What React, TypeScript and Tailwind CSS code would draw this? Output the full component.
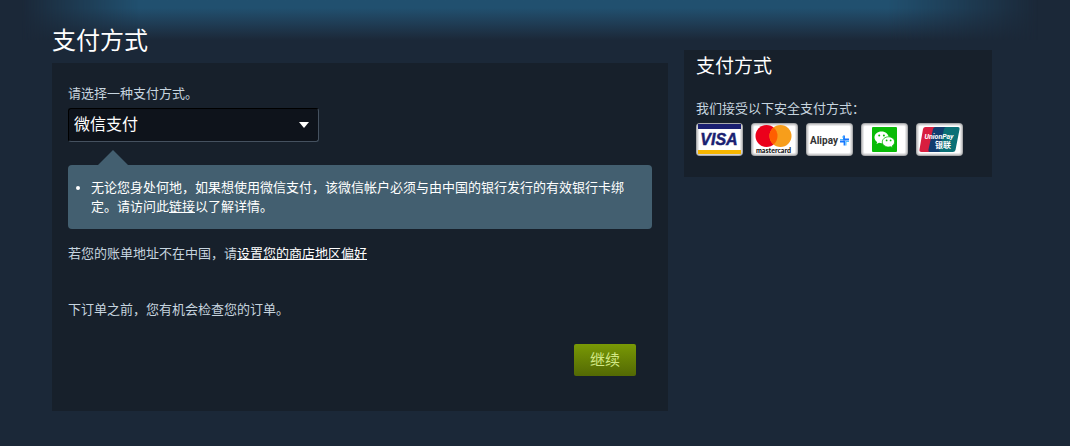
import React, { useState } from 'react';

interface CardBadgeProps {
  label: string;
  children: React.ReactNode;
}

const methods = ['微信支付', '支付宝', 'Visa', 'MasterCard', '银联'];

// White card with a grey bevelled rim, the brand is drawn on top of it
const CardBadge: React.FC<CardBadgeProps> = ({ label, children }) => (
  <svg width="47" height="33" viewBox="0 0 47 33" role="img" aria-label={label} className="shrink-0">
    <rect x="0" y="0" width="47" height="33" rx="4" fill="#a9aaac" />
    <rect x="1" y="1" width="45" height="31" rx="3" fill="#d0d0d1" />
    <rect x="2" y="2" width="43" height="29" rx="2" fill="#e9e9ea" />
    <rect x="3" y="3" width="41" height="27" rx="1" fill="#fff" />
    {children}
  </svg>
);

const PaymentLogos = () => (
  <div className="flex flex-wrap gap-2">
    <CardBadge label="Visa">
      <rect x="2" y="1" width="43" height="5" fill="#1a1f71" />
      <rect x="2" y="27" width="43" height="4" fill="#f7b600" />
      <text x="23" y="22" textAnchor="middle" fontFamily="Liberation Sans, sans-serif" fontSize="16" fontWeight="700" fontStyle="italic" fill="#1a1f71" stroke="#1a1f71" strokeWidth="0.5">VISA</text>
    </CardBadge>
    <CardBadge label="MasterCard">
      <circle cx="15.5" cy="13" r="11" fill="#eb001b" />
      <circle cx="29.5" cy="13" r="11" fill="#f79e1b" />
      <path d="M22.5 4.5a11 11 0 0 1 0 17a11 11 0 0 1 0-17z" fill="#ff5f00" />
      <text x="22.5" y="30" textAnchor="middle" fontFamily="Lato, sans-serif" fontSize="7" fontWeight="900" fill="#111">mastercard</text>
    </CardBadge>
    <CardBadge label="Alipay+">
      <text x="4" y="21" fontFamily="Roboto, sans-serif" fontSize="10" fontWeight="700" fill="#333">Alipay</text>
      <path d="M38 12.500v4h5" fill="none" stroke="#1677ff" strokeWidth="1.800" />
      <path d="M34 18.500h4.500v4" fill="none" stroke="#1677ff" strokeWidth="1.800" />
      <path d="M34 16.500h3M40 18.500v4M40 18.500h3M37 15v-2" fill="none" stroke="#4dbdff" strokeWidth="1" />
    </CardBadge>
    <CardBadge label="微信支付">
      <rect x="11" y="4" width="25" height="25" rx="1" fill="#09bb07" />
      <path d="M20.500 8.500c-4 0-7 2.600-7 5.900 0 1.900 1 3.500 2.700 4.600l-.7 2.100 2.500-1.300c.8.2 1.600.4 2.500.4 4 0 7.200-2.600 7.200-5.800s-3.200-5.900-7.200-5.900z" fill="#fff" />
      <path d="M27.600 13.800c-3.600 0-6.300 2.300-6.300 5.100s2.700 5.100 6.300 5.100c.7 0 1.400-.1 2-.3l2.100 1.100-.6-1.800c1.500-1 2.500-2.400 2.500-4.100 0-2.800-2.600-5.100-6-5.100z" fill="#fff" stroke="#09bb07" strokeWidth="0.8" />
      <circle cx="18.200" cy="12.500" r="1" fill="#09bb07" />
      <circle cx="22.900" cy="12.500" r="1" fill="#09bb07" />
      <circle cx="25.600" cy="17.400" r="0.9" fill="#09bb07" />
      <circle cx="29.600" cy="17.400" r="0.9" fill="#09bb07" />
    </CardBadge>
    <CardBadge label="UnionPay 银联">
      <path d="M9.500 4h11l-5 25H5.500q-2.500 0-2-2.500L7 6q.5-2 2.500-2z" fill="#d81e3f" />
      <path d="M19.500 4h12l-5.500 25H14q-2 0-1.500-2.500L17 6q.5-2 2.500-2z" fill="#123c6e" />
      <path d="M30.500 4H42q2 0 1.600 2L39.500 27q-.5 2-2.500 2H25q-2 0-1.500-2.500L28 6q.5-2 2.500-2z" fill="#0b7076" />
      <text x="23" y="16" textAnchor="middle" fontFamily="Roboto, sans-serif" fontSize="7" fontWeight="700" fontStyle="italic" fill="#fff">UnionPay</text>
      <text x="27" y="25" textAnchor="middle" fontFamily="Noto Sans CJK SC, sans-serif" fontSize="8" fontWeight="700" fill="#fff">银联</text>
    </CardBadge>
  </div>
);

const App: React.FC = () => {
  const [method, setMethod] = useState(methods[0]);

  return (
    <div className="relative min-h-screen bg-[#1b2838] pt-[25px] pb-8 pl-[52px] pr-[78px] font-['Liberation_Sans','Noto_Sans_CJK_SC',sans-serif] text-[13px] leading-[19px] text-[#c6d4df]">
      {/* Blue glow under the store header */}
      <div className="pointer-events-none absolute inset-x-0 top-0 h-10 bg-linear-to-b from-[#21506f] from-20% via-[#1f3c54] via-60% to-[#1b2838] [mask-image:linear-gradient(to_right,transparent_2%,black_13%,black_83%,transparent_97%)]" />

      <div className="relative grid grid-cols-[2fr_1fr] items-start gap-4">
        <main>
          <h1 className="mb-[6px] text-2xl leading-8 text-white">支付方式</h1>

          <form className="bg-[#17202b] px-4 pt-[21px] pb-[35px]" onSubmit={e => e.preventDefault()}>
            <label htmlFor="payment-method" className="mb-[5px] block">请选择一种支付方式。</label>
            <div className="relative w-[251px]">
              <select
                id="payment-method"
                value={method}
                onChange={e => setMethod(e.target.value)}
                className="h-[34px] w-full appearance-none rounded-[3px] border border-black border-r-[#45515f] border-b-[#45515f] bg-[#0e131b] pl-[5px] pr-8 text-base leading-6 text-white outline-none"
              >
                {methods.map(m => (
                  <option key={m} value={m}>{m}</option>
                ))}
              </select>
              <svg width="10" height="6" viewBox="0 0 10 6" className="pointer-events-none absolute top-[14px] right-[10px]" aria-hidden="true">
                <path d="M0 0h10L5 6z" fill="#fff" />
              </svg>
            </div>

            {/* Notice for the selected method */}
            <svg width="30" height="15" viewBox="0 0 30 15" className="mt-2 ml-[30px] block" aria-hidden="true">
              <path d="M15 0l15 15H0z" fill="#435f70" />
            </svg>
            <ul className="list-disc rounded bg-[#435f70] py-[13px] pr-5 pl-[23px] text-white">
              <li>
                无论您身处何地，如果想使用微信支付，该微信帐户必须与由中国的银行发行的有效银行卡绑定。请访问此<a href="#details" className="underline">链接</a>以了解详情。
              </li>
            </ul>

            <p className="mt-[15px]">
              若您的账单地址不在中国，请<a href="#region" className="text-white underline">设置您的商店地区偏好</a>
            </p>

            <p className="mt-[37px]">下订单之前，您有机会检查您的订单。</p>

            <div className="mt-[25px] flex justify-end pr-4">
              <button type="submit" className="h-8 rounded-[2px] bg-linear-to-b from-[#799905] to-[#536904] px-4 text-[15px] leading-8 text-[#d2e885]">
                继续
              </button>
            </div>
          </form>
        </main>

        <aside className="mt-[25px] bg-[#17202b] px-3 pt-[5px] pb-[21px]">
          <h2 className="mb-5 text-[19px] leading-6 text-white">支付方式</h2>
          <p className="mb-[5px]">我们接受以下安全支付方式：</p>
          <PaymentLogos />
        </aside>
      </div>
    </div>
  );
};

export default App;
